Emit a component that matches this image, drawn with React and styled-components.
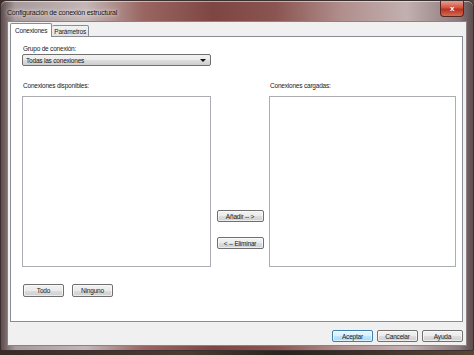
import styled, { createGlobalStyle } from "styled-components"

const GlobalStyle = createGlobalStyle`
    html, body {
        margin: 0;
        padding: 0;
        background: #2e2320;
        font-family: "Liberation Sans", Arial, sans-serif;
        font-size: 6.5px;
        letter-spacing: -0.2px;
        color: #1a1a1a;
    }
`;

const Desktop = styled.div`
    width: 474px;
    height: 355px;
    background: linear-gradient(90deg, #3a2b27 0%, #4a3a30 40%, #2b211e 60%, #5a4636 100%);
    overflow: hidden;
`;

const Window = styled.div`
    width: 474px;
    box-sizing: border-box;
    border-radius: 6px 6px 2px 2px;
    border: 1px solid #3b3030;
    background: linear-gradient(90deg, #5e4c4e 0%, #a89a9c 3%, #c4b6b6 18%, #9a6662 30%, #7e4642 45%, #8a5450 58%, #b08e8c 72%, #c2b0b0 86%, #8c7a7c 97%, #5d4d4f 100%);
    padding: 0 6px 4px;
    display: flex;
    flex-direction: column;
    box-shadow: inset 0 1px 0 rgba(255,255,255,0.5);
`;

const TitleBar = styled.div`
    height: 20px;
    flex-shrink: 0;
    display: flex;
    align-items: center;
    justify-content: space-between;
`;

const Title = styled.span`
    font-size: 7px;
    color: #111;
    text-shadow: 0 0 6px rgba(255,255,255,0.9), 0 0 3px rgba(255,255,255,0.8);
    margin-top: 2px;
`;

const CloseButton = styled.div`
    width: 22px;
    height: 15px;
    margin-top: -4px;
    margin-right: 3px;
    border-radius: 0 0 4px 4px;
    border: 1px solid #5a2420;
    border-top: none;
    background: linear-gradient(180deg, #e8a092 0%, #d0523e 45%, #b8321f 55%, #d26c54 100%);
    display: flex;
    align-items: center;
    justify-content: center;
    color: #fff;
    font-size: 8px;
    font-weight: bold;
`;

const Client = styled.div`
    flex-shrink: 0;
    background: #f0f0f0;
    border: 1px solid #8d8184;
    display: flex;
    flex-direction: column;
    padding: 1px 3px 3px 1px;
`;

const TabStrip = styled.div`
    display: flex;
    align-items: flex-end;
    height: 14px;
    flex-shrink: 0;
    padding-left: 3px;
    position: relative;
    z-index: 1;
`;

const Tab = styled.div`
    height: ${p => (p.$active ? "14px" : "12px")};
    box-sizing: border-box;
    padding: 0 ${p => (p.$active ? "4px" : "2px")};
    display: flex;
    align-items: center;
    border: 1px solid #898c95;
    border-bottom: ${p => (p.$active ? "none" : "1px solid #898c95")};
    border-left: ${p => (p.$first ? "1px solid #898c95" : "none")};
    background: ${p => (p.$active ? "#fff" : "linear-gradient(180deg, #f2f2f2, #e3e3e3)")};
    margin-left: ${p => (p.$active ? "-2px" : "0")};
    border-radius: 2px 2px 0 0;
`;

const Panel = styled.div`
    height: 286px;
    flex-shrink: 0;
    box-sizing: border-box;
    margin-top: -1px;
    margin-left: 1px;
    background: #fff;
    border: 1px solid #898c95;
    padding: 7px 7px 0 11px;
    display: flex;
    flex-direction: column;
`;

const Label = styled.div`
    height: 9px;
    line-height: 9px;
    padding-left: 1px;
`;

const Select = styled.div`
    width: 189px;
    height: 12px;
    box-sizing: border-box;
    margin-top: 1px;
    border: 1px solid #707070;
    border-radius: 2px;
    background: linear-gradient(180deg, #f2f2f2 0%, #ebebeb 50%, #dddddd 51%, #cfcfcf 100%);
    display: flex;
    align-items: center;
    justify-content: space-between;
    padding: 0 4px 0 3px;
`;

const Arrow = styled.div`
    width: 0;
    height: 0;
    border-left: 3px solid transparent;
    border-right: 3px solid transparent;
    border-top: 3px solid #111;
`;

const Lists = styled.div`
    display: grid;
    grid-template-columns: 189px 58px 187px;
    margin-top: 15px;
`;

const Column = styled.div`
    display: flex;
    flex-direction: column;
`;

const ListBox = styled.div`
    height: 171px;
    margin-top: 6px;
    box-sizing: border-box;
    border: 1px solid #abadb3;
    background: #fff;
`;

const Middle = styled.div`
    display: flex;
    flex-direction: column;
    align-items: center;
    gap: 15px;
    padding-top: 129px;
`;

const Button = styled.div`
    width: ${p => p.$w || "41px"};
    height: ${p => p.$h || "12px"};
    flex-shrink: 0;
    box-sizing: border-box;
    border: 1px solid ${p => (p.$default ? "#3c7fb1" : "#707070")};
    border-radius: 2px;
    background: ${p =>
        p.$default
            ? "linear-gradient(180deg, #eaf6fd 0%, #d9f0fc 50%, #bee6fd 51%, #a7d9f5 100%)"
            : "linear-gradient(180deg, #f2f2f2 0%, #ebebeb 50%, #dddddd 51%, #cfcfcf 100%)"};
    box-shadow: inset 0 0 0 1px rgba(255,255,255,0.6);
    display: flex;
    align-items: center;
    justify-content: center;
`;

const BottomRow = styled.div`
    display: flex;
    gap: 8px;
    margin-top: 17px;
    padding-left: 1px;
`;

const Footer = styled.div`
    display: flex;
    justify-content: flex-end;
    gap: 4px;
    margin-top: 8px;
`;

const App = () => {
    return <Desktop>
        <GlobalStyle />
        <Window>
            <TitleBar>
                <Title>Configuración de conexión estructural</Title>
                <CloseButton>x</CloseButton>
            </TitleBar>
            <Client>
                <TabStrip>
                    <Tab $active $first>Conexiones</Tab>
                    <Tab>Parámetros</Tab>
                </TabStrip>
                <Panel>
                    <Label>Grupo de conexión:</Label>
                    <Select>
                        <span>Todas las conexiones</span>
                        <Arrow />
                    </Select>
                    <Lists>
                        <Column>
                            <Label>Conexiones disponibles:</Label>
                            <ListBox />
                        </Column>
                        <Middle>
                            <Button $w="47px">Añadir -- &gt;</Button>
                            <Button $w="47px">&lt; -- Eliminar</Button>
                        </Middle>
                        <Column>
                            <Label>Conexiones cargadas:</Label>
                            <ListBox />
                        </Column>
                    </Lists>
                    <BottomRow>
                        <Button $h="13px">Todo</Button>
                        <Button $h="13px">Ninguno</Button>
                    </BottomRow>
                </Panel>
                <Footer>
                    <Button $default>Aceptar</Button>
                    <Button>Cancelar</Button>
                    <Button>Ayuda</Button>
                </Footer>
            </Client>
        </Window>
    </Desktop>
}

export default App
